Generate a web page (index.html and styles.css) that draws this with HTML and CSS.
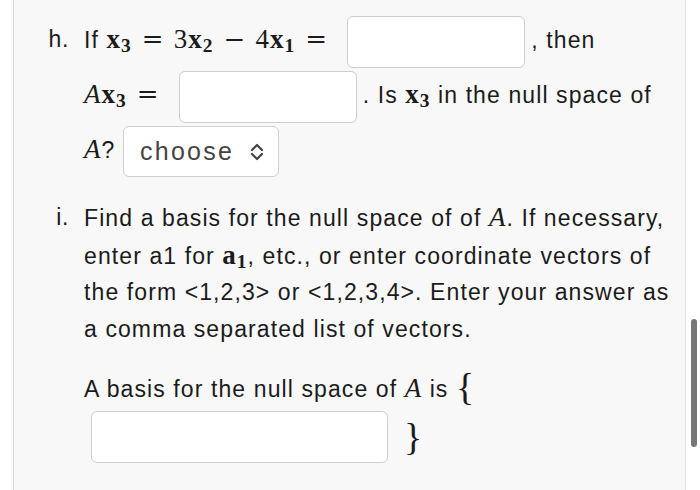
FILE: index.html
```html
<!DOCTYPE html>
<html>
<head>
<meta charset="utf-8">
<link rel="stylesheet" href="styles.css">
</head>
<body>
<div class="page">
  <div class="gutter-left"></div>
  <main class="panel">
    <ol class="parts">
      <li class="part part-h">
        <span class="marker">h.</span>
        <div class="body">If <span class="m"><b class="mb">x<sub>3</sub></b><span class="op">=</span>3<b class="mb">x<sub>2</sub></b><span class="op">−</span>4<b class="mb">x<sub>1</sub></b><span class="op">=</span></span><span class="field f-short"></span>, then <span class="m"><i class="mi">A</i><b class="mb">x<sub>3</sub></b><span class="op">=</span></span><span class="field f-short"></span>. Is <span class="m"><b class="mb">x<sub>3</sub></b></span> in the null space of <span class="m"><i class="mi">A</i></span>? <span class="select">choose <svg class="chev" width="14" height="20" viewBox="0 0 14 20"><path d="M2 8 L7 3 L12 8 M2 12 L7 17 L12 12" fill="none" stroke="#444" stroke-width="2.2" stroke-linecap="round" stroke-linejoin="round"/></svg></span></div>
      </li>
      <li class="part part-i">
        <span class="marker">i.</span>
        <div class="body">
          <p class="prompt">Find a basis for the null space of of <span class="m"><i class="mi">A</i></span>. If necessary, enter a1 for <span class="m"><b class="mb">a<sub>1</sub></b></span>, etc., or enter coordinate vectors of the form &lt;1,2,3&gt; or &lt;1,2,3,4&gt;. Enter your answer as a comma separated list of vectors.</p>
          <div class="answer">
            <div class="answer-line">A basis for the null space of <span class="m"><i class="mi">A</i></span> is <span class="brace">{</span></div>
            <div class="answer-row"><span class="field f-long"></span><span class="brace brace-close">}</span></div>
          </div>
        </div>
      </li>
    </ol>
  </main>
  <div class="gutter-right"><div class="thumb"></div></div>
</div>
</body>
</html>
```
FILE: styles.css
```css
html, body {
  margin: 0;
  padding: 0;
  background: #ffffff;
}
body {
  font-family: "Liberation Sans", Arial, sans-serif;
  font-size: 23px;
  color: #1b1b1b;
}
.page {
  display: flex;
  width: 700px;
  height: 490px;
  overflow: hidden;
}
.gutter-left {
  width: 13px;
  flex: none;
}
.panel {
  width: 673px;
  flex: none;
  background: #f8f8f8;
  border-left: 1px solid #d9d9d9;
  border-right: 1px solid #e2e2e2;
  box-sizing: border-box;
  padding-top: 13px;
}
.gutter-right {
  flex: 1;
  display: flex;
  flex-direction: column;
  align-items: center;
  padding-left: 2px;
}
.thumb {
  margin-top: 319px;
  width: 6px;
  height: 128px;
  border-radius: 3px;
  background: #777777;
}
.parts {
  list-style: none;
  margin: 0;
  padding: 0;
}
.part {
  display: grid;
  grid-template-columns: 55px 1fr;
  column-gap: 15px;
  padding-right: 9px;
}
.marker {
  text-align: right;
  letter-spacing: 0.6px;
}
.body {
  letter-spacing: 1.1px;
}
.part-h .marker {
  line-height: 53.5px;
}
.part-h .body {
  line-height: 53.5px;
}
.part-i {
  margin-top: 22px;
}
.part-i .marker {
  line-height: 36.5px;
}
.prompt {
  margin: 0;
  line-height: 36.5px;
}
.m {
  font-family: "Liberation Serif", "Times New Roman", serif;
  font-size: 27px;
  letter-spacing: 1px;
}
.mb {
  font-weight: bold;
}
.mi {
  font-style: italic;
}
.m sub {
  font-size: 72%;
  vertical-align: -0.2em;
  line-height: 0;
}
.op {
  font-family: "DejaVu Serif", serif;
  font-size: 26px;
  margin: 0 0.39em;
  letter-spacing: 0;
}
.field {
  display: inline-block;
  box-sizing: border-box;
  height: 52px;
  background: #ffffff;
  border: 1.5px solid #cdcdcd;
  border-radius: 6px;
  vertical-align: middle;
}
.f-short {
  width: 178px;
  margin: 0 6px 0 10px;
}
.select {
  display: inline-flex;
  align-items: center;
  box-sizing: border-box;
  height: 51px;
  width: 156px;
  padding-left: 16px;
  gap: 16px;
  background: #ffffff;
  border: 1px solid #cfcfcf;
  border-radius: 6px;
  color: #444444;
  vertical-align: middle;
  line-height: 1;
  font-size: 25px;
  letter-spacing: 2.3px;
}
.chev {
  display: block;
}
.answer {
  margin-top: 22px;
}
.answer-line {
  line-height: 36px;
}
.answer-row {
  display: flex;
  align-items: center;
  margin-top: 4px;
}
.f-long {
  width: 297px;
  margin-left: 7px;
}
.brace {
  font-family: "Liberation Serif", "Times New Roman", serif;
  font-size: 38px;
  line-height: 36px;
  vertical-align: -3px;
  letter-spacing: 0;
}
.brace-close {
  margin-left: 16px;
}
```
